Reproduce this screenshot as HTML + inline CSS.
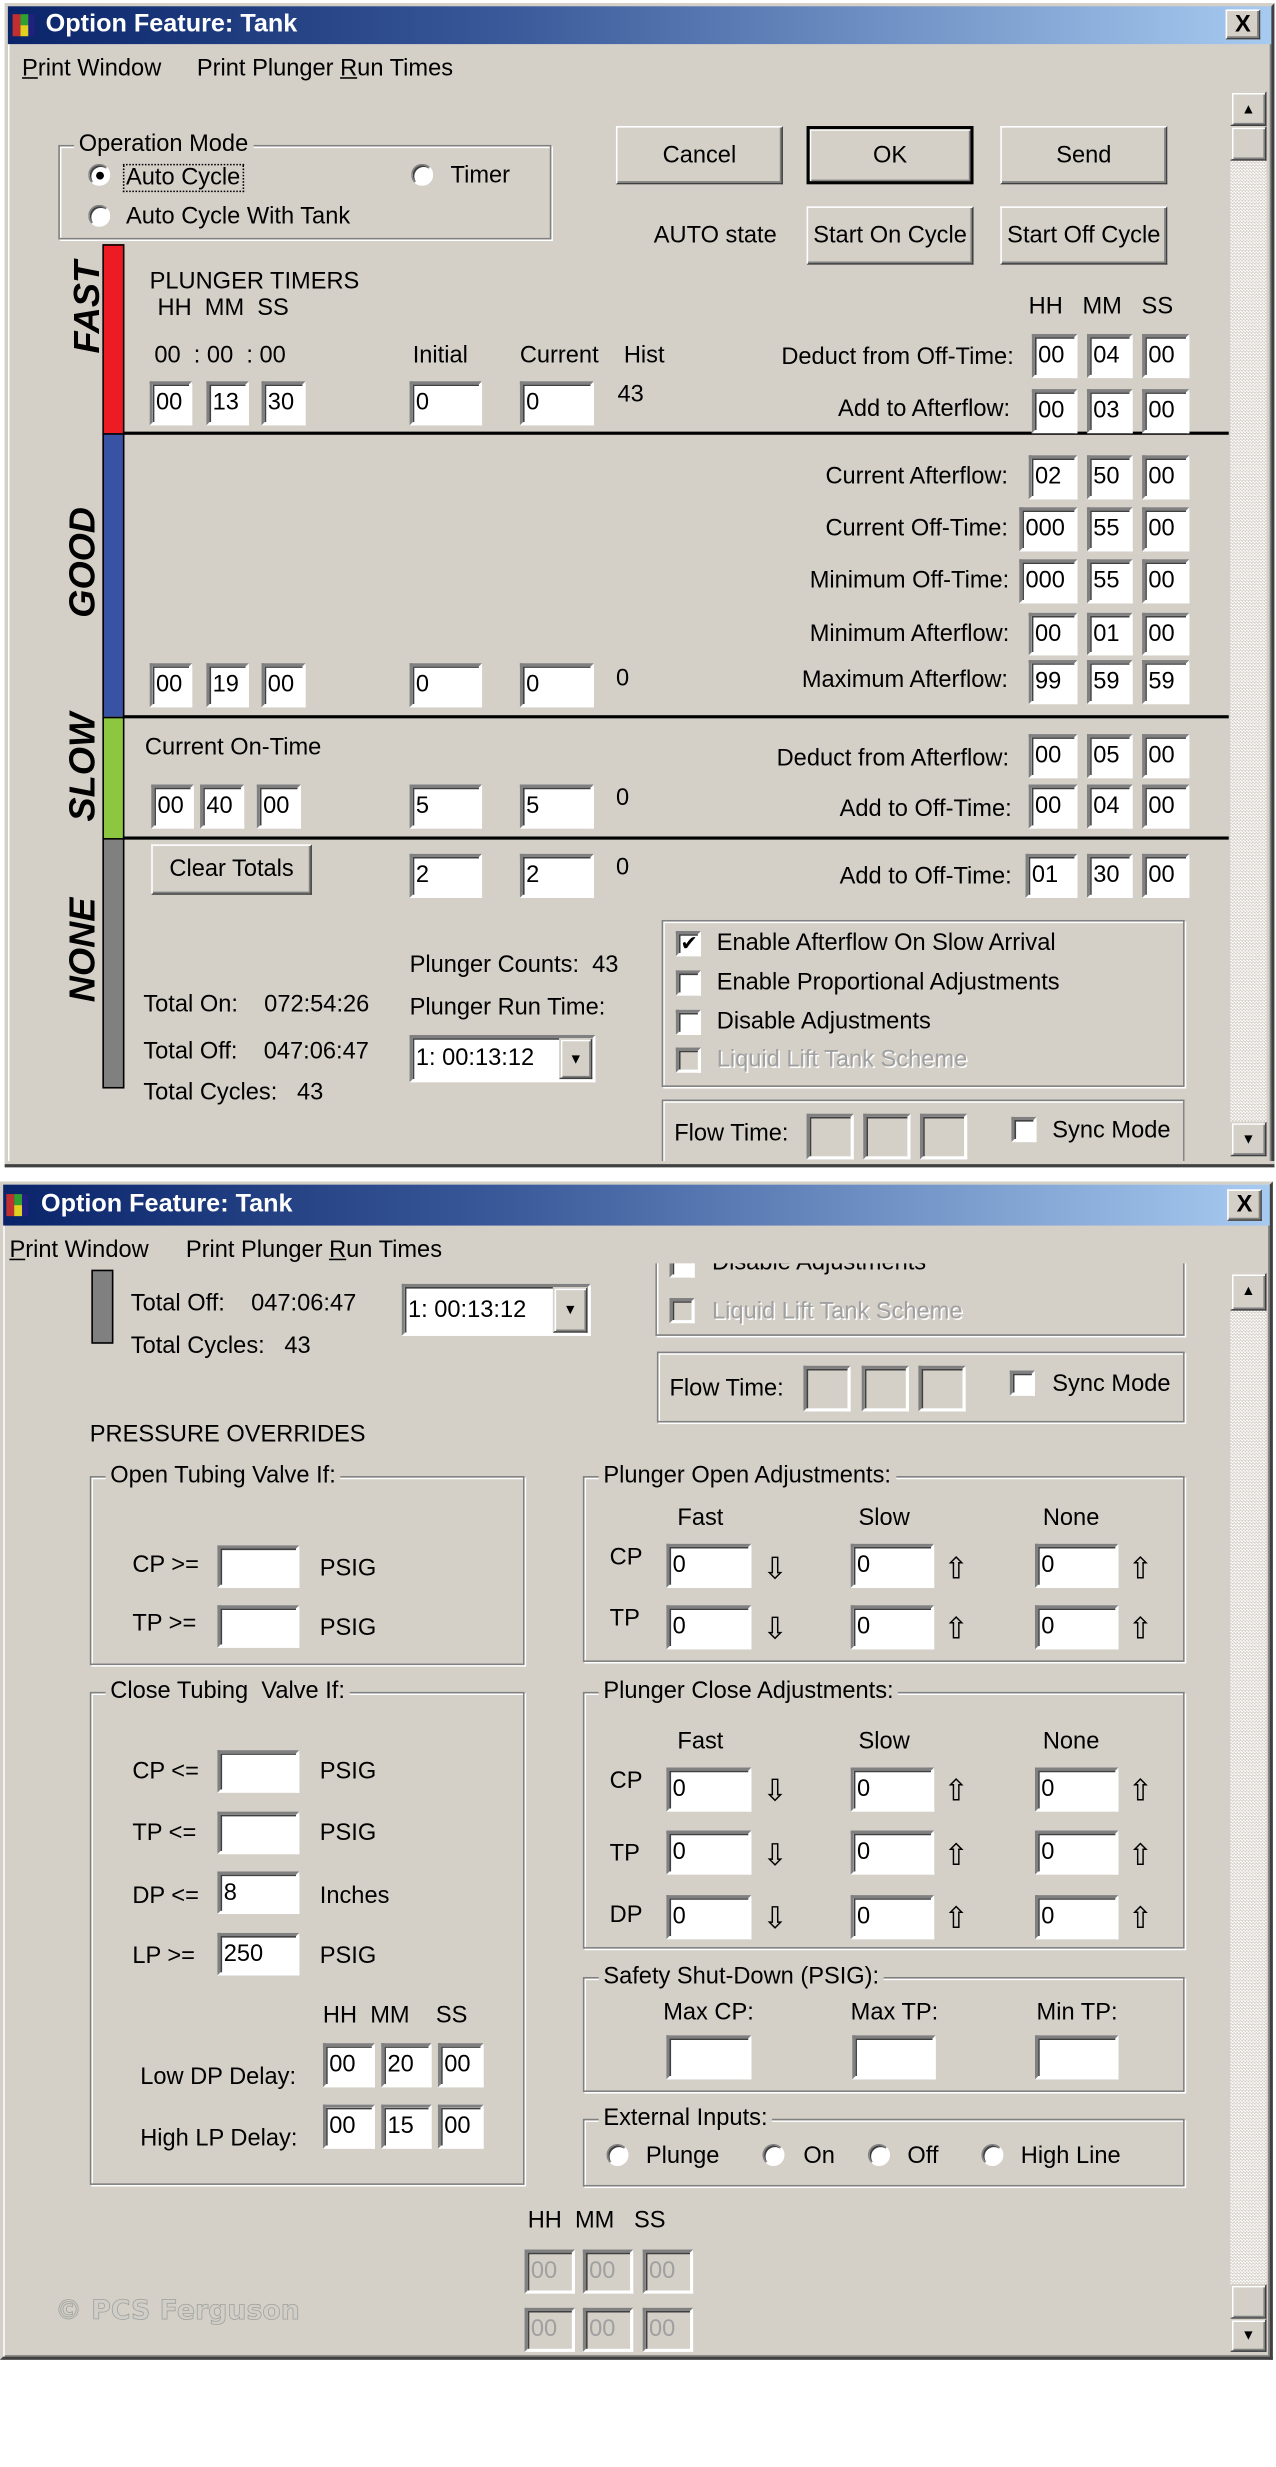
<!DOCTYPE html>
<html><head><meta charset="utf-8"><style>
html,body{margin:0;padding:0;background:#fff;width:1276px;height:2467px;overflow:hidden}
#c{position:absolute;left:0;top:0;width:810px;height:1566px;transform:scale(1.5753);transform-origin:0 0;font-family:"Liberation Sans",Arial,sans-serif;font-size:15px;color:#000}
#c div{position:absolute;box-sizing:border-box}
.win{background:#d4d0c8;border:2px solid;border-color:#d4d0c8 #404040 #404040 #d4d0c8;box-shadow:inset 1px 1px #fff,inset -1px -1px #808080}
.tb{background:linear-gradient(90deg,#0a246a,#3a5a9a 40%,#a6caf0);color:#fff;font-weight:bold;font-size:16px;line-height:24px;padding-left:24px;white-space:nowrap}
.cl{background:#d4d0c8;border:1px solid;border-color:#fff #404040 #404040 #fff;box-shadow:inset -1px -1px #808080;font:bold 15px "Liberation Sans",sans-serif;text-align:center;line-height:17px}
.t{white-space:nowrap;line-height:16px}
.in{background:#fff;border:2px solid;border-color:#808080 #fff #fff #808080;box-shadow:inset 1px 1px #404040;padding:2px 0 0 2px;white-space:nowrap;line-height:20px;font-size:15px}
.dis{background:#d4d0c8;color:#a0a0a0}
.btn{background:#d4d0c8;border:1px solid;border-color:#fff #404040 #404040 #fff;box-shadow:inset -1px -1px #808080;text-align:center;white-space:nowrap}
.grp{border:1px solid #808080;box-shadow:1px 1px #fff,inset 1px 1px #fff}
.lg{background:#d4d0c8;padding:0 3px;white-space:nowrap;line-height:16px}
.rd{width:14px;height:14px;border-radius:50%;background:#fff;border:1px solid;border-color:#808080 #fff #fff #808080;box-shadow:inset 1px 1px #404040}
.cb{width:16px;height:16px;background:#fff;border:2px solid;border-color:#808080 #fff #fff #808080;box-shadow:inset 1px 1px #404040}
.rot{transform:rotate(-90deg);font-weight:bold;font-style:italic;font-size:23px;white-space:nowrap;line-height:24px;text-align:center;width:90px;height:24px}
.bar{border:1px solid #000}
.hl{height:2px;background:#000}
.sb{background:repeating-conic-gradient(#fff 0 25%,#d4d0c8 0 50%) 0 0/2px 2px}
.sbb{background:#d4d0c8;border:1px solid;border-color:#d4d0c8 #404040 #404040 #d4d0c8;box-shadow:inset 1px 1px #fff,inset -1px -1px #808080;font-size:9px;text-align:center;line-height:20px}
.ar{font-family:"DejaVu Sans",sans-serif;font-size:19px;line-height:20px}
.g{color:#a0a0a0;text-shadow:1px 1px #fff}
</style></head><body><div id="c">

<!-- WINDOW 1 -->
<div class="win" style="left:3px;top:2px;width:806px;height:739px"></div>
<div class="tb" style="left:5px;top:4px;width:802px;height:24px">Option Feature: Tank</div>
<div style="left:8px;top:9px;width:5px;height:14px;background:#c03030"></div>
<div style="left:13px;top:9px;width:5px;height:7px;background:#30a030"></div>
<div style="left:13px;top:16px;width:5px;height:7px;background:#e0d020"></div>
<div style="left:18px;top:9px;width:4px;height:14px;background:#202080"></div>
<div class="cl" style="left:778px;top:6px;width:22px;height:19px">X</div>
<div class="t" style="left:14px;top:36px"><u>P</u>rint Window</div>
<div class="t" style="left:125px;top:36px">Print Plunger <u>R</u>un Times</div>

<div class="sb" style="left:781px;top:58px;width:23px;height:676px"></div>
<div class="sbb" style="left:781px;top:58px;width:23px;height:22px">▲</div>
<div class="sbb" style="left:781px;top:80px;width:23px;height:22px"></div>
<div class="sbb" style="left:781px;top:712px;width:23px;height:22px">▼</div>

<div class="grp" style="left:37px;top:92px;width:313px;height:60px"></div>
<div class="lg" style="left:47px;top:84px">Operation Mode</div>
<div class="rd" style="left:56px;top:104px"></div><div style="left:61px;top:109px;width:5px;height:5px;border-radius:50%;background:#000"></div>
<div class="t" style="left:78px;top:104px;border:1px dotted #000;padding:0 1px">Auto Cycle</div>
<div class="rd" style="left:261px;top:104px"></div><div class="t" style="left:286px;top:104px">Timer</div>
<div class="rd" style="left:56px;top:130px"></div><div class="t" style="left:80px;top:130px">Auto Cycle With Tank</div>

<div class="btn" style="left:391px;top:80px;width:106px;height:37px;line-height:35px">Cancel</div>
<div class="btn" style="left:512px;top:80px;width:106px;height:37px;line-height:33px;border:2px solid #000;box-shadow:inset 1px 1px #fff,inset -1px -1px #808080">OK</div>
<div class="btn" style="left:635px;top:80px;width:106px;height:37px;line-height:35px">Send</div>
<div class="t" style="left:415px;top:142px">AUTO state</div>
<div class="btn" style="left:512px;top:131px;width:106px;height:37px;line-height:35px">Start On Cycle</div>
<div class="btn" style="left:635px;top:131px;width:106px;height:37px;line-height:35px">Start Off Cycle</div>

<!-- color bar -->
<div class="bar" style="left:65px;top:155px;width:14px;height:121px;background:#ed1c24"></div>
<div class="bar" style="left:65px;top:275px;width:14px;height:181px;background:#3953a4"></div>
<div class="bar" style="left:65px;top:455px;width:14px;height:78px;background:#8dc63f"></div>
<div class="bar" style="left:65px;top:532px;width:14px;height:159px;background:#808080"></div>
<div class="hl" style="left:78px;top:274px;width:702px"></div>
<div class="hl" style="left:78px;top:454px;width:702px"></div>
<div class="hl" style="left:78px;top:531px;width:702px"></div>
<div class="rot" style="left:10px;top:183px">FAST</div>
<div class="rot" style="left:7px;top:345px">GOOD</div>
<div class="rot" style="left:7px;top:475px">SLOW</div>
<div class="rot" style="left:7px;top:591px">NONE</div>

<!-- fast -->
<div class="t" style="left:95px;top:171px">PLUNGER TIMERS</div>
<div class="t" style="left:100px;top:188px">HH&nbsp;&nbsp;MM&nbsp;&nbsp;SS</div>
<div class="t" style="left:98px;top:218px">00&nbsp;&nbsp;:&nbsp;00&nbsp;&nbsp;:&nbsp;00</div>
<div class="in" style="left:95px;top:242px;width:27px;height:28px">00</div>
<div class="in" style="left:131px;top:242px;width:27px;height:28px">13</div>
<div class="in" style="left:166px;top:242px;width:28px;height:28px">30</div>
<div class="t" style="left:262px;top:218px">Initial</div>
<div class="t" style="left:330px;top:218px">Current</div>
<div class="t" style="left:396px;top:218px">Hist</div>
<div class="in" style="left:260px;top:242px;width:46px;height:28px">0</div>
<div class="in" style="left:330px;top:242px;width:47px;height:28px">0</div>
<div class="t" style="left:392px;top:243px">43</div>
<div class="t" style="left:653px;top:187px">HH&nbsp;&nbsp;&nbsp;MM&nbsp;&nbsp;&nbsp;SS</div>
<div class="t" style="left:496px;top:219px">Deduct from Off-Time:</div>
<div class="in" style="left:655px;top:212px;width:29px;height:28px">00</div>
<div class="in" style="left:690px;top:212px;width:29px;height:28px">04</div>
<div class="in" style="left:725px;top:212px;width:30px;height:28px">00</div>
<div class="t" style="left:532px;top:252px">Add to Afterflow:</div>
<div class="in" style="left:655px;top:247px;width:29px;height:28px">00</div>
<div class="in" style="left:690px;top:247px;width:29px;height:28px">03</div>
<div class="in" style="left:725px;top:247px;width:30px;height:28px">00</div>

<!-- good -->
<div class="t" style="left:524px;top:295px">Current Afterflow:</div>
<div class="in" style="left:653px;top:289px;width:31px;height:28px">02</div>
<div class="in" style="left:690px;top:289px;width:29px;height:28px">50</div>
<div class="in" style="left:725px;top:289px;width:30px;height:28px">00</div>
<div class="t" style="left:524px;top:328px">Current Off-Time:</div>
<div class="in" style="left:647px;top:322px;width:37px;height:28px">000</div>
<div class="in" style="left:690px;top:322px;width:29px;height:28px">55</div>
<div class="in" style="left:725px;top:322px;width:30px;height:28px">00</div>
<div class="t" style="left:514px;top:361px">Minimum Off-Time:</div>
<div class="in" style="left:647px;top:355px;width:37px;height:28px">000</div>
<div class="in" style="left:690px;top:355px;width:29px;height:28px">55</div>
<div class="in" style="left:725px;top:355px;width:30px;height:28px">00</div>
<div class="t" style="left:514px;top:395px">Minimum Afterflow:</div>
<div class="in" style="left:653px;top:389px;width:31px;height:27px">00</div>
<div class="in" style="left:690px;top:389px;width:29px;height:27px">01</div>
<div class="in" style="left:725px;top:389px;width:30px;height:27px">00</div>
<div class="t" style="left:509px;top:424px">Maximum Afterflow:</div>
<div class="in" style="left:653px;top:419px;width:31px;height:28px">99</div>
<div class="in" style="left:690px;top:419px;width:29px;height:28px">59</div>
<div class="in" style="left:725px;top:419px;width:30px;height:28px">59</div>
<div class="in" style="left:95px;top:421px;width:27px;height:28px">00</div>
<div class="in" style="left:131px;top:421px;width:27px;height:28px">19</div>
<div class="in" style="left:166px;top:421px;width:28px;height:28px">00</div>
<div class="in" style="left:260px;top:421px;width:46px;height:28px">0</div>
<div class="in" style="left:330px;top:421px;width:47px;height:28px">0</div>
<div class="t" style="left:391px;top:423px">0</div>

<!-- slow -->
<div class="t" style="left:92px;top:467px">Current On-Time</div>
<div class="in" style="left:96px;top:498px;width:27px;height:28px">00</div>
<div class="in" style="left:127px;top:498px;width:28px;height:28px">40</div>
<div class="in" style="left:163px;top:498px;width:28px;height:28px">00</div>
<div class="in" style="left:260px;top:498px;width:46px;height:28px">5</div>
<div class="in" style="left:330px;top:498px;width:47px;height:28px">5</div>
<div class="t" style="left:391px;top:499px">0</div>
<div class="t" style="left:493px;top:474px">Deduct from Afterflow:</div>
<div class="in" style="left:653px;top:466px;width:31px;height:28px">00</div>
<div class="in" style="left:690px;top:466px;width:29px;height:28px">05</div>
<div class="in" style="left:725px;top:466px;width:30px;height:28px">00</div>
<div class="t" style="left:533px;top:506px">Add to Off-Time:</div>
<div class="in" style="left:653px;top:498px;width:31px;height:28px">00</div>
<div class="in" style="left:690px;top:498px;width:29px;height:28px">04</div>
<div class="in" style="left:725px;top:498px;width:30px;height:28px">00</div>

<!-- none -->
<div class="btn" style="left:96px;top:536px;width:102px;height:32px;line-height:30px">Clear Totals</div>
<div class="in" style="left:260px;top:542px;width:46px;height:28px">2</div>
<div class="in" style="left:330px;top:542px;width:47px;height:28px">2</div>
<div class="t" style="left:391px;top:543px">0</div>
<div class="t" style="left:533px;top:549px">Add to Off-Time:</div>
<div class="in" style="left:651px;top:542px;width:33px;height:28px">01</div>
<div class="in" style="left:690px;top:542px;width:29px;height:28px">30</div>
<div class="in" style="left:725px;top:542px;width:30px;height:28px">00</div>
<div class="t" style="left:260px;top:605px">Plunger Counts:&nbsp; 43</div>
<div class="t" style="left:260px;top:632px">Plunger Run Time:</div>
<div class="in" style="left:260px;top:657px;width:118px;height:30px;line-height:22px">1: 00:13:12</div>
<div class="sbb" style="left:355px;top:659px;width:21px;height:26px;line-height:24px">▼</div>
<div class="t" style="left:91px;top:630px">Total On:&nbsp;&nbsp;&nbsp; 072:54:26</div>
<div class="t" style="left:91px;top:660px">Total Off:&nbsp;&nbsp;&nbsp; 047:06:47</div>
<div class="t" style="left:91px;top:686px">Total Cycles:&nbsp;&nbsp; 43</div>
<div class="grp" style="left:420px;top:584px;width:332px;height:106px"></div>
<div class="cb" style="left:429px;top:591px"></div><div style="left:432px;top:591px;font-size:13px;line-height:15px">✔</div>
<div class="t" style="left:455px;top:591px">Enable Afterflow On Slow Arrival</div>
<div class="cb" style="left:429px;top:616px"></div><div class="t" style="left:455px;top:616px">Enable Proportional Adjustments</div>
<div class="cb" style="left:429px;top:641px"></div><div class="t" style="left:455px;top:641px">Disable Adjustments</div>
<div class="cb" style="left:429px;top:665px;background:#d4d0c8"></div><div class="t g" style="left:455px;top:665px">Liquid Lift Tank Scheme</div>
<div class="grp" style="left:420px;top:698px;width:332px;height:60px;clip-path:inset(0 0 20px 0)"></div>
<div class="t" style="left:428px;top:712px">Flow Time:</div>
<div class="in" style="left:512px;top:707px;width:30px;height:29px;background:#d4d0c8"></div>
<div class="in" style="left:548px;top:707px;width:30px;height:29px;background:#d4d0c8"></div>
<div class="in" style="left:584px;top:707px;width:30px;height:29px;background:#d4d0c8"></div>
<div class="cb" style="left:642px;top:709px"></div><div class="t" style="left:668px;top:710px">Sync Mode</div>
<div style="left:3px;top:737px;width:806px;height:4px;background:#d4d0c8;border-bottom:2px solid #404040"></div>

<!-- WINDOW 2 -->
<div class="win" style="left:0px;top:750px;width:808px;height:748px"></div>
<div class="tb" style="left:2px;top:752px;width:804px;height:26px;line-height:26px">Option Feature: Tank</div>
<div style="left:4px;top:758px;width:5px;height:14px;background:#c03030"></div>
<div style="left:9px;top:758px;width:5px;height:7px;background:#30a030"></div>
<div style="left:9px;top:765px;width:5px;height:7px;background:#e0d020"></div>
<div style="left:14px;top:758px;width:4px;height:14px;background:#202080"></div>
<div class="cl" style="left:779px;top:755px;width:22px;height:20px">X</div>
<div class="t" style="left:6px;top:786px"><u>P</u>rint Window</div>
<div class="t" style="left:118px;top:786px">Print Plunger <u>R</u>un Times</div>

<div class="sb" style="left:781px;top:808px;width:23px;height:685px"></div>
<div class="sbb" style="left:781px;top:808px;width:23px;height:24px">▲</div>
<div class="sbb" style="left:781px;top:1450px;width:23px;height:22px"></div>
<div class="sbb" style="left:781px;top:1472px;width:23px;height:21px;line-height:19px">▼</div>

<div class="bar" style="left:58px;top:806px;width:14px;height:47px;background:#808080"></div>
<div class="t" style="left:83px;top:820px">Total Off:&nbsp;&nbsp;&nbsp; 047:06:47</div>
<div class="t" style="left:83px;top:847px">Total Cycles:&nbsp;&nbsp; 43</div>
<div class="in" style="left:255px;top:815px;width:120px;height:33px;line-height:25px">1: 00:13:12</div>
<div class="sbb" style="left:351px;top:817px;width:22px;height:29px;line-height:27px">▼</div>

<div style="left:416px;top:802px;width:338px;height:48px;overflow:hidden">
  <div style="left:0;top:-60px;width:336px;height:106px;border:1px solid #808080;box-shadow:1px 1px #fff,inset 1px 1px #fff"></div>
  <div class="cb" style="left:9px;top:-7px"></div><div class="t" style="left:36px;top:-8px">Disable Adjustments</div>
  <div class="cb" style="left:9px;top:22px;background:#d4d0c8"></div><div class="t g" style="left:36px;top:23px">Liquid Lift Tank Scheme</div>
</div>
<div class="grp" style="left:417px;top:858px;width:335px;height:45px"></div>
<div class="t" style="left:425px;top:874px">Flow Time:</div>
<div class="in" style="left:510px;top:867px;width:30px;height:29px;background:#d4d0c8"></div>
<div class="in" style="left:547px;top:867px;width:30px;height:29px;background:#d4d0c8"></div>
<div class="in" style="left:583px;top:867px;width:30px;height:29px;background:#d4d0c8"></div>
<div class="cb" style="left:641px;top:870px"></div><div class="t" style="left:668px;top:871px">Sync Mode</div>

<div class="t" style="left:57px;top:903px">PRESSURE OVERRIDES</div>

<div class="grp" style="left:57px;top:937px;width:276px;height:120px"></div>
<div class="lg" style="left:67px;top:929px">Open Tubing Valve If:</div>
<div class="t" style="left:84px;top:986px">CP &gt;=</div>
<div class="in" style="left:138px;top:981px;width:52px;height:27px"></div>
<div class="t" style="left:203px;top:988px">PSIG</div>
<div class="t" style="left:84px;top:1023px">TP &gt;=</div>
<div class="in" style="left:138px;top:1019px;width:52px;height:27px"></div>
<div class="t" style="left:203px;top:1026px">PSIG</div>

<div class="grp" style="left:57px;top:1074px;width:276px;height:313px"></div>
<div class="lg" style="left:67px;top:1066px">Close Tubing&nbsp; Valve If:</div>
<div class="t" style="left:84px;top:1117px">CP &lt;=</div>
<div class="in" style="left:138px;top:1111px;width:52px;height:27px"></div>
<div class="t" style="left:203px;top:1117px">PSIG</div>
<div class="t" style="left:84px;top:1156px">TP &lt;=</div>
<div class="in" style="left:138px;top:1150px;width:52px;height:27px"></div>
<div class="t" style="left:203px;top:1156px">PSIG</div>
<div class="t" style="left:84px;top:1196px">DP &lt;=</div>
<div class="in" style="left:138px;top:1188px;width:52px;height:27px">8</div>
<div class="t" style="left:203px;top:1196px">Inches</div>
<div class="t" style="left:84px;top:1234px">LP &gt;=</div>
<div class="in" style="left:138px;top:1227px;width:52px;height:27px">250</div>
<div class="t" style="left:203px;top:1234px">PSIG</div>
<div class="t" style="left:205px;top:1272px">HH&nbsp;&nbsp;MM&nbsp;&nbsp;&nbsp;&nbsp;SS</div>
<div class="t" style="left:89px;top:1311px">Low DP Delay:</div>
<div class="in" style="left:205px;top:1297px;width:33px;height:28px">00</div>
<div class="in" style="left:242px;top:1297px;width:32px;height:28px">20</div>
<div class="in" style="left:278px;top:1297px;width:29px;height:28px">00</div>
<div class="t" style="left:89px;top:1350px">High LP Delay:</div>
<div class="in" style="left:205px;top:1336px;width:33px;height:28px">00</div>
<div class="in" style="left:242px;top:1336px;width:32px;height:28px">15</div>
<div class="in" style="left:278px;top:1336px;width:29px;height:28px">00</div>

<div class="grp" style="left:370px;top:937px;width:382px;height:118px"></div>
<div class="lg" style="left:380px;top:929px">Plunger Open Adjustments:</div>
<div class="t" style="left:430px;top:956px">Fast</div>
<div class="t" style="left:545px;top:956px">Slow</div>
<div class="t" style="left:662px;top:956px">None</div>
<div class="t" style="left:387px;top:981px">CP</div>
<div class="in" style="left:423px;top:980px;width:54px;height:28px">0</div><div class="ar" style="left:484px;top:986px">⇩</div>
<div class="in" style="left:540px;top:980px;width:53px;height:28px">0</div><div class="ar" style="left:599px;top:986px">⇧</div>
<div class="in" style="left:657px;top:980px;width:53px;height:28px">0</div><div class="ar" style="left:716px;top:986px">⇧</div>
<div class="t" style="left:387px;top:1020px">TP</div>
<div class="in" style="left:423px;top:1019px;width:54px;height:28px">0</div><div class="ar" style="left:484px;top:1024px">⇩</div>
<div class="in" style="left:540px;top:1019px;width:53px;height:28px">0</div><div class="ar" style="left:599px;top:1024px">⇧</div>
<div class="in" style="left:657px;top:1019px;width:53px;height:28px">0</div><div class="ar" style="left:716px;top:1024px">⇧</div>

<div class="grp" style="left:370px;top:1074px;width:382px;height:163px"></div>
<div class="lg" style="left:380px;top:1066px">Plunger Close Adjustments:</div>
<div class="t" style="left:430px;top:1098px">Fast</div>
<div class="t" style="left:545px;top:1098px">Slow</div>
<div class="t" style="left:662px;top:1098px">None</div>
<div class="t" style="left:387px;top:1123px">CP</div>
<div class="in" style="left:423px;top:1122px;width:54px;height:28px">0</div><div class="ar" style="left:484px;top:1127px">⇩</div>
<div class="in" style="left:540px;top:1122px;width:53px;height:28px">0</div><div class="ar" style="left:599px;top:1127px">⇧</div>
<div class="in" style="left:657px;top:1122px;width:53px;height:28px">0</div><div class="ar" style="left:716px;top:1127px">⇧</div>
<div class="t" style="left:387px;top:1169px">TP</div>
<div class="in" style="left:423px;top:1162px;width:54px;height:28px">0</div><div class="ar" style="left:484px;top:1168px">⇩</div>
<div class="in" style="left:540px;top:1162px;width:53px;height:28px">0</div><div class="ar" style="left:599px;top:1168px">⇧</div>
<div class="in" style="left:657px;top:1162px;width:53px;height:28px">0</div><div class="ar" style="left:716px;top:1168px">⇧</div>
<div class="t" style="left:387px;top:1208px">DP</div>
<div class="in" style="left:423px;top:1203px;width:54px;height:28px">0</div><div class="ar" style="left:484px;top:1208px">⇩</div>
<div class="in" style="left:540px;top:1203px;width:53px;height:28px">0</div><div class="ar" style="left:599px;top:1208px">⇧</div>
<div class="in" style="left:657px;top:1203px;width:53px;height:28px">0</div><div class="ar" style="left:716px;top:1208px">⇧</div>

<div class="grp" style="left:370px;top:1255px;width:382px;height:73px"></div>
<div class="lg" style="left:380px;top:1247px">Safety Shut-Down (PSIG):</div>
<div class="t" style="left:421px;top:1270px">Max CP:</div>
<div class="t" style="left:540px;top:1270px">Max TP:</div>
<div class="t" style="left:658px;top:1270px">Min TP:</div>
<div class="in" style="left:423px;top:1292px;width:54px;height:28px"></div>
<div class="in" style="left:541px;top:1292px;width:53px;height:28px"></div>
<div class="in" style="left:657px;top:1292px;width:53px;height:28px"></div>

<div class="grp" style="left:370px;top:1345px;width:382px;height:43px"></div>
<div class="lg" style="left:380px;top:1337px">External Inputs:</div>
<div class="rd" style="left:385px;top:1361px"></div><div class="t" style="left:410px;top:1361px">Plunge</div>
<div class="rd" style="left:484px;top:1361px"></div><div class="t" style="left:510px;top:1361px">On</div>
<div class="rd" style="left:551px;top:1361px"></div><div class="t" style="left:576px;top:1361px">Off</div>
<div class="rd" style="left:623px;top:1361px"></div><div class="t" style="left:648px;top:1361px">High Line</div>

<div class="t" style="left:335px;top:1402px">HH&nbsp;&nbsp;MM&nbsp;&nbsp;&nbsp;SS</div>
<div class="in dis" style="left:333px;top:1428px;width:32px;height:28px">00</div>
<div class="in dis" style="left:370px;top:1428px;width:32px;height:28px">00</div>
<div class="in dis" style="left:408px;top:1428px;width:32px;height:28px">00</div>
<div class="in dis" style="left:333px;top:1465px;width:32px;height:28px">00</div>
<div class="in dis" style="left:370px;top:1465px;width:32px;height:28px">00</div>
<div class="in dis" style="left:408px;top:1465px;width:32px;height:28px">00</div>
<div class="t" style="left:35px;top:1458px;font-family:'DejaVu Sans',sans-serif;font-size:17px;font-weight:bold;color:#d0cec8;-webkit-text-stroke:0.5px #a0a09a;line-height:18px">© PCS Ferguson</div>

</div></body></html>
